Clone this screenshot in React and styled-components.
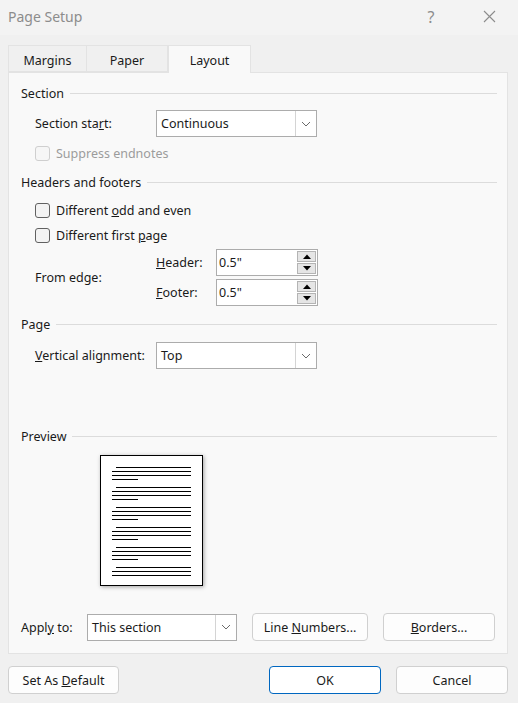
import React from 'react';
import styled, { createGlobalStyle } from 'styled-components';

const Global = createGlobalStyle`
  html, body {
    margin: 0;
    padding: 0;
    background: #f0f0f0;
  }
  body {
    font-family: 'Noto Sans', 'Open Sans', sans-serif;
    font-size: 12.5px;
    color: #1a1a1a;
  }
`;

const Window = styled.div`
  width: 518px;
  height: 703px;
  background: #f0f0f0;
  display: flex;
  flex-direction: column;
  overflow: hidden;
`;

const TitleBar = styled.div`
  height: 35px;
  display: flex;
  align-items: center;
  background: #f3f3f3;
  padding: 0 0 2px 8px;
  box-sizing: border-box;
  color: #8c8c8c;
  font-size: 14px;
`;

const TitleText = styled.div`
  flex: 1;
`;

const TitleButton = styled.div`
  width: ${p => p.w}px;
  display: flex;
  justify-content: center;
  align-items: center;
  color: #8c8c8c;
  font-size: 16px;
`;

const TabRow = styled.div`
  display: flex;
  align-items: flex-end;
  margin: 9px 0 0 8px;
  height: 28px;
  position: relative;
  z-index: 1;
`;

const Tab = styled.div`
  width: ${p => p.w}px;
  height: ${p => (p.active ? 28 : 27)}px;
  box-sizing: border-box;
  display: flex;
  align-items: center;
  justify-content: center;
  padding-top: ${p => (p.active ? 1 : 3)}px;
  background: ${p => (p.active ? '#f9f9f9' : '#f0f0f0')};
  border: 1px solid #e3e3e3;
  border-bottom: ${p => (p.active ? 'none' : '1px solid #e3e3e3')};
  border-left: ${p => (p.first || p.active ? '1px solid #e3e3e3' : 'none')};
  margin-bottom: ${p => (p.active ? -1 : 0)}px;
  color: #1a1a1a;
`;

const Panel = styled.div`
  margin: 0 10px 0 8px;
  background: #f9f9f9;
  border: 1px solid #e3e3e3;
  padding: 0 10px 12px 12px;
  display: flex;
  flex-direction: column;
`;

const GroupHeader = styled.div`
  display: flex;
  align-items: center;
  height: 16px;
  margin-top: ${p => p.mt}px;
  &::after {
    content: '';
    flex: 1;
    height: 1px;
    background: #dcdcdc;
    margin-left: 6px;
  }
`;

const Row = styled.div`
  display: flex;
  align-items: center;
  margin-top: ${p => p.mt}px;
  padding-left: ${p => p.indent || 0}px;
`;

const Label = styled.span`
  width: ${p => (p.w ? `${p.w}px` : 'auto')};
  flex-shrink: 0;
`;

const Select = styled.div`
  width: ${p => p.w}px;
  height: 27px;
  box-sizing: border-box;
  border: 1px solid #acacac;
  background: #fff;
  display: flex;
  align-items: stretch;
`;

const SelectValue = styled.div`
  flex: 1;
  display: flex;
  align-items: center;
  padding-left: 4px;
`;

const SelectArrow = styled.div`
  width: 20px;
  border-left: 1px solid #d4d4d4;
  display: flex;
  align-items: center;
  justify-content: center;
`;

const CheckRow = styled.label`
  display: flex;
  align-items: center;
  height: 16px;
  margin-top: ${p => p.mt}px;
  padding-left: 14px;
  color: ${p => (p.disabled ? '#9c9c9c' : '#1a1a1a')};
`;

const Box = styled.span`
  width: 15px;
  height: 15px;
  box-sizing: border-box;
  border: 1px solid ${p => (p.disabled ? '#cfcfcf' : '#616161')};
  border-radius: 3px;
  background: ${p => (p.disabled ? '#f6f6f6' : '#f3f3f3')};
  margin-right: 6px;
  flex-shrink: 0;
`;

const EdgeBlock = styled.div`
  display: flex;
  align-items: center;
  margin-top: 6px;
  padding-left: 14px;
`;

const EdgeFields = styled.div`
  display: flex;
  flex-direction: column;
  gap: 3px;
`;

const Spin = styled.div`
  width: 102px;
  height: 27px;
  box-sizing: border-box;
  border: 1px solid #acacac;
  background: #fff;
  display: flex;
`;

const SpinValue = styled.div`
  flex: 1;
  display: flex;
  align-items: center;
  padding-left: 2px;
`;

const SpinButtons = styled.div`
  width: 19px;
  display: flex;
  flex-direction: column;
  gap: 1px;
  padding: 1px 1px 1px 0;
`;

const SpinButton = styled.div`
  flex: 1;
  background: #e5e5e5;
  border: 1px solid #b4b4b4;
  display: flex;
  align-items: center;
  justify-content: center;
`;

const PreviewPage = styled.div`
  width: 101px;
  height: 129px;
  margin: 11px 0 0 79px;
  border: 1px solid #000;
  background: #fff;
  box-shadow: 1px 1px 4px rgba(0, 0, 0, 0.35);
`;

const Button = styled.div`
  width: ${p => p.w}px;
  height: 28px;
  box-sizing: border-box;
  border: 1px solid ${p => (p.primary ? '#0067c0' : '#d0d0d0')};
  border-radius: 4px;
  background: ${p => (p.primary ? '#ffffff' : '#fdfdfd')};
  display: flex;
  align-items: center;
  justify-content: center;
  margin-left: ${p => p.ml || 0}px;
  color: #1a1a1a;
`;

const Footer = styled.div`
  display: flex;
  margin: 12px 10px 0 8px;
`;

const Spacer = styled.div`
  flex: 1;
`;

function Chevron() {
  return (
    <svg width="10" height="6" viewBox="0 0 10 6">
      <path d="M1 1 L5 5 L9 1" fill="none" stroke="#6a6a6a" strokeWidth="1" />
    </svg>
  );
}

function Triangle({ down }) {
  return (
    <svg width="8" height="5" viewBox="0 0 8 5">
      <path d={down ? 'M0 0 H8 L4 4.5 Z' : 'M0 5 H8 L4 0.5 Z'} fill="#000" />
    </svg>
  );
}

function Dropdown({ w, value }) {
  return (
    <Select w={w}>
      <SelectValue>{value}</SelectValue>
      <SelectArrow>
        <Chevron />
      </SelectArrow>
    </Select>
  );
}

function SpinBox({ value }) {
  return (
    <Spin>
      <SpinValue>{value}</SpinValue>
      <SpinButtons>
        <SpinButton>
          <Triangle />
        </SpinButton>
        <SpinButton>
          <Triangle down />
        </SpinButton>
      </SpinButtons>
    </Spin>
  );
}

// six paragraph blocks: indented first line, two full lines, short last line
function PageLines() {
  const groups = [0, 1, 2, 3, 4, 5];
  return (
    <svg width="101" height="129" viewBox="0 0 101 129" shapeRendering="crispEdges">
      {groups.map(g => {
        const y = 11.5 + g * 20;
        const last = g === 5;
        return (
          <g key={g} stroke="#000" strokeWidth="1">
            <line x1="15" x2="90" y1={y} y2={y} />
            <line x1="11" x2="90" y1={y + 4} y2={y + 4} />
            <line x1="11" x2="90" y1={y + 8} y2={y + 8} />
            {!last && <line x1="11" x2="37" y1={y + 12} y2={y + 12} />}
          </g>
        );
      })}
    </svg>
  );
}

export default function App() {
  return (
    <>
      <Global />
      <Window>
        <TitleBar>
          <TitleText>Page Setup</TitleText>
          <TitleButton w={58}>?</TitleButton>
          <TitleButton w={58}>
            <svg width="13" height="13" viewBox="0 0 13 13">
              <path d="M1 1 L12 12 M12 1 L1 12" stroke="#8c8c8c" strokeWidth="1.1" />
            </svg>
          </TitleButton>
        </TitleBar>

        <TabRow>
          <Tab w={79} first>Margins</Tab>
          <Tab w={81}>Paper</Tab>
          <Tab w={83} active>Layout</Tab>
        </TabRow>

        <Panel>
          <GroupHeader mt={12}>Section</GroupHeader>
          <Row mt={9} indent={14}>
            <Label w={121}>
              Section sta<u>r</u>t:
            </Label>
            <Dropdown w={161} value="Continuous" />
          </Row>
          <CheckRow mt={8} disabled>
            <Box disabled />
            <span>Suppress endnotes</span>
          </CheckRow>

          <GroupHeader mt={13}>Headers and footers</GroupHeader>
          <CheckRow mt={12}>
            <Box />
            <span>
              Different <u>o</u>dd and even
            </span>
          </CheckRow>
          <CheckRow mt={9}>
            <Box />
            <span>
              Different first <u>p</u>age
            </span>
          </CheckRow>
          <EdgeBlock>
            <Label w={121}>From edge:</Label>
            <EdgeFields>
              <Row mt={0}>
                <Label w={60}>
                  <u>H</u>eader:
                </Label>
                <SpinBox value='0.5"' />
              </Row>
              <Row mt={0}>
                <Label w={60}>
                  <u>F</u>ooter:
                </Label>
                <SpinBox value='0.5"' />
              </Row>
            </EdgeFields>
          </EdgeBlock>

          <GroupHeader mt={10}>Page</GroupHeader>
          <Row mt={10} indent={14}>
            <Label w={121}>
              <u>V</u>ertical alignment:
            </Label>
            <Dropdown w={161} value="Top" />
          </Row>

          <GroupHeader mt={59}>Preview</GroupHeader>
          <PreviewPage>
            <PageLines />
          </PreviewPage>

          <Row mt={27}>
            <Label w={66}>
              Appl<u>y</u> to:
            </Label>
            <Dropdown w={150} value="This section" />
            <Button w={116} ml={15}>
              <span>
                Line <u>N</u>umbers...
              </span>
            </Button>
            <Button w={112} ml={15}>
              <span>
                <u>B</u>orders...
              </span>
            </Button>
          </Row>
        </Panel>

        <Footer>
          <Button w={111}>
            <span>
              Set As <u>D</u>efault
            </span>
          </Button>
          <Spacer />
          <Button w={112} primary>
            OK
          </Button>
          <Button w={112} ml={15}>
            Cancel
          </Button>
        </Footer>
      </Window>
    </>
  );
}
